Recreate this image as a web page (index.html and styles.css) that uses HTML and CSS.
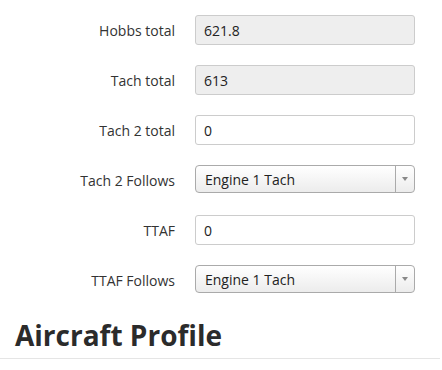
FILE: index.html
```html
<!DOCTYPE html>
<html>
<head>
<meta charset="utf-8">
<link rel="stylesheet" href="styles.css">
</head>
<body>
<div class="form">
  <div class="row"><label class="lbl">Hobbs total</label><div class="field readonly">621.8</div></div>
  <div class="row"><label class="lbl">Tach total</label><div class="field readonly">613</div></div>
  <div class="row"><label class="lbl">Tach 2 total</label><div class="field">0</div></div>
  <div class="row"><label class="lbl">Tach 2 Follows</label><div class="field select"><span class="val">Engine 1 Tach</span><span class="arrow"><span class="tri"></span></span></div></div>
  <div class="row"><label class="lbl">TTAF</label><div class="field">0</div></div>
  <div class="row"><label class="lbl">TTAF Follows</label><div class="field select"><span class="val">Engine 1 Tach</span><span class="arrow"><span class="tri"></span></span></div></div>
</div>
<h2 class="heading">Aircraft Profile</h2>
<div class="rule"></div>
</body>
</html>
```
FILE: styles.css
```css
html, body { margin: 0; padding: 0; background: #fff; }
body { font-family: "Open Sans", sans-serif; color: #333; width: 442px; height: 370px; overflow: hidden; }
.form { padding-top: 15px; display: flex; flex-direction: column; gap: 20px; }
.row { display: flex; align-items: center; gap: 20px; height: 30px; }
.lbl { width: 175px; text-align: right; font-size: 14px; color: #333; }
.field { box-sizing: border-box; width: 220px; height: 30px; border: 1px solid #ccc; border-radius: 3px; font-size: 14px; color: #222; padding-left: 8px; display: flex; align-items: center; background: #fff; }
.readonly { background: #eee; }
.select { height: 28px; align-self: flex-start; background: linear-gradient(#fff, #ececec); border-color: #aaa; padding-left: 0; border-radius: 4px; }
.select .val { flex: 1; padding-left: 9px; font-size: 14px; color: #222; }
.arrow { width: 18px; height: 100%; border-left: 1px solid #aaa; display: flex; align-items: center; justify-content: center; }
.tri { width: 0; height: 0; border-left: 3px solid transparent; border-right: 3px solid transparent; border-top: 4px solid #888; }
.heading { margin: 25px 0 0 15px; font-size: 28px; font-weight: 700; line-height: 31px; color: #2b2b2b; }
.rule { margin-top: 7px; height: 1px; background: #e5e5e5; width: 440px; }
```
